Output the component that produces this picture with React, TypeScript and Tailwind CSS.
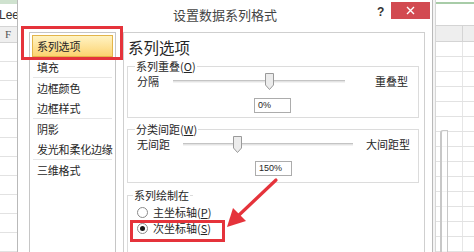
import React from "react";

const FONT = '"Noto Sans CJK SC", "Liberation Sans", sans-serif';

const LIST = [
  { label: "系列选项", selected: true, sepAfter: false },
  { label: "填充", sepAfter: true },
  { label: "边框颜色" },
  { label: "边框样式", sepAfter: true },
  { label: "阴影" },
  { label: "发光和柔化边缘", sepAfter: true },
  { label: "三维格式" },
];

export default function App() {
  return (
    <div
      className="relative w-[474px] h-[252px] overflow-hidden bg-white flex text-[#262626]"
      style={{ fontFamily: FONT }}
    >
      <LeftSheet />

      {/* dialog */}
      <div className="w-[416px] h-full shrink-0 bg-white border-l border-r border-[#b9b9b9] flex flex-col">
        {/* title bar */}
        <div className="h-[32px] shrink-0 flex items-start">
          <div className="w-[55px]" />
          <div className="flex-1 text-center text-[13px] leading-[32px] text-[#444] -mt-[1px]">设置数据系列格式</div>
          <div className="w-[55px] flex items-start">
            <span className="mt-[5px] w-[7px] text-[12px] font-bold leading-[14px] text-[#333]" style={{ fontFamily: '"Liberation Sans", sans-serif' }}>?</span>
            <div className="ml-[7px] mt-[2px] w-[39px] h-[17px] bg-[#d24a51] flex items-center justify-center">
              <svg width="9" height="9" viewBox="0 0 9 9">
                <path d="M1 1 L8 8 M8 1 L1 8" stroke="white" strokeWidth="1.4" />
              </svg>
            </div>
          </div>
        </div>

        {/* body */}
        <div className="flex-1 flex pl-[11px] pr-[7px]">
          {/* category list */}
          <div className="w-[87px] h-[240px] shrink-0 border border-[#c6c6c6] bg-white pt-[2px] px-[2px] text-[11px] tracking-[-0.2px]">
            {LIST.map((it) => (
              <div key={it.label}>
                <div
                  className={
                    it.selected
                      ? "h-[22px] flex items-center pl-[4px] whitespace-nowrap border border-[#e3b54a] bg-gradient-to-b from-[#fff3c2] to-[#fcd36f]"
                      : "h-[20px] flex items-center pl-[5px] whitespace-nowrap"
                  }
                >
                  {it.label}
                </div>
                {it.sepAfter && <div className="h-px mx-[1px] bg-[#e6e6e6]" />}
              </div>
            ))}
          </div>

          {/* option pane */}
          <div className="ml-[7px] flex-1 h-[240px] border border-[#cfcfcf] bg-white pl-[3px] pr-[5px] text-[11px]">
            <div className="text-[15.5px] leading-[20px] pl-[1px] pt-[4px]">系列选项</div>

            {/* group: overlap */}
            <Group label={<>系列重叠(<u>O</u>)</>} className="mt-[9px] h-[52px]">
              <SliderRow left="分隔" right="重叠型" leftW={36} trackW={172} thumb={92} rightPr={10} />
              <Field value="0%" ml={126} />
            </Group>

            {/* group: gap width */}
            <Group label={<>分类间距(<u>W</u>)</>} className="mt-[11px] h-[54px]">
              <SliderRow left="无间距" right="大间距型" leftW={46} trackW={170} thumb={50} rightPr={8} />
              <Field value="150%" ml={127} />
            </Group>

            {/* group: plot on */}
            <div className="relative mt-[12px] w-[66px] h-[60px] border-l border-t border-[#dcdcdc]">
              <span className="absolute -top-[9px] left-[5px] bg-white px-[1px] leading-[16px] whitespace-nowrap">系列绘制在</span>
              <div className="pt-[8px] pl-[9px] w-max whitespace-nowrap">
                <Radio label={<>主坐标轴(<u>P</u>)</>} />
                <Radio label={<>次坐标轴(<u>S</u>)</>} checked />
              </div>
            </div>
          </div>
        </div>
      </div>

      <RightSheet />

      {/* annotations */}
      <div className="absolute left-[21px] top-[26px] w-[102px] h-[34px] border-[3px] border-[#e5333b]" />
      <div className="absolute left-[130px] top-[220px] w-[95px] h-[22px] border-[3px] border-[#e5333b]" />
      <svg className="absolute left-0 top-0" width="474" height="252">
        <line x1="276" y1="180" x2="238" y2="216" stroke="#e5333b" strokeWidth="3.2" strokeLinecap="round" />
        <polygon points="227,227 233,208 246,221" fill="#e5333b" />
      </svg>
    </div>
  );
}

function Group({ label, className, children }: { label: React.ReactNode; className: string; children: React.ReactNode }) {
  return (
    <div className={`relative border border-[#dcdcdc] ${className}`}>
      <span className="absolute -top-[9px] left-[7px] bg-white px-[1px] leading-[16px] whitespace-nowrap">{label}</span>
      {children}
    </div>
  );
}

function SliderRow({
  left, right, leftW, trackW, thumb, rightPr,
}: { left: string; right: string; leftW: number; trackW: number; thumb: number; rightPr: number }) {
  return (
    <div className="mt-[6px] h-[17px] flex items-center pl-[9px]" style={{ paddingRight: rightPr }}>
      <span style={{ width: leftW }} className="shrink-0">{left}</span>
      <div className="relative h-[3px] border-t border-b border-t-[#c4c4c4] border-b-[#f2f2f2] bg-[#e3e3e3]" style={{ width: trackW }}>
        <svg className="absolute -top-[8px]" style={{ left: thumb }} width="9" height="17" viewBox="0 0 9 17">
          <path d="M0.5 0.5 H8.5 V12 L4.5 16.5 L0.5 12 Z" fill="#ececec" stroke="#9a9a9a" />
        </svg>
      </div>
      <span className="ml-auto">{right}</span>
    </div>
  );
}

function Field({ value, ml }: { value: string; ml: number }) {
  return (
    <div
      className="mt-[8px] w-[37px] h-[15px] border border-[#acacac] bg-white text-[9px] leading-[13px] pl-[3px]"
      style={{ marginLeft: ml, fontFamily: '"Liberation Sans", sans-serif' }}
    >
      {value}
    </div>
  );
}

function Radio({ label, checked }: { label: React.ReactNode; checked?: boolean }) {
  return (
    <div className="h-[16px] flex items-center">
      <span className="shrink-0 w-[11px] h-[11px] rounded-full border border-[#8a8a8a] bg-white flex items-center justify-center">
        {checked && <span className="w-[5px] h-[5px] rounded-full bg-[#1a1a1a]" />}
      </span>
      <span className="ml-[5px]">{label}</span>
    </div>
  );
}

function LeftSheet() {
  return (
    <div className="w-[17px] h-full shrink-0 flex flex-col overflow-hidden">
      <div className="h-[4px] bg-[#cfe2cf]" />
      <div className="h-[22px] text-[12px] leading-[22px] whitespace-nowrap text-[#333] -ml-[1px]" style={{ fontFamily: '"Liberation Sans", sans-serif' }}>Lee</div>
      <div className="h-[17px] bg-[#efefef] border-t border-b border-[#d4d4d4] text-[11px] leading-[15px] pl-[5px] text-[#555]" style={{ fontFamily: '"Liberation Serif", serif' }}>F</div>
      {Array.from({ length: 11 }).map((_, i) => (
        <div key={i} className="h-[19px] shrink-0 border-b border-[#e2e2e2]" />
      ))}
    </div>
  );
}

function RightSheet() {
  return (
    <div className="relative flex-1 h-full flex">
      <div className="w-[3px] h-full bg-[#f4f4f4] border-r border-[#d6d6d6]" />
      <div className="flex-1 flex flex-col">
        <div className="h-[4px] border-b-2 border-[#a8cca8]" />
        <div className="h-[22px] bg-white" />
        <div className="h-[17px] bg-[#eeeeee] border-t border-b border-[#d4d4d4] flex">
          <div className="w-[27px] border-r border-[#d4d4d4]" />
        </div>
        {Array.from({ length: 14 }).map((_, i) => (
          <div key={i} className="h-[15px] shrink-0 border-b border-[#e2e2e2] flex">
            <div className="w-[27px] border-r border-[#e6e6e6]" />
          </div>
        ))}
      </div>
      {/* chart object edge */}
      <div className="absolute left-[7px] top-[130px] w-[8px] h-[130px] border-l-2 border-r border-t border-[#c8c8c8] rounded-tl-[3px] bg-white/60" />
    </div>
  );
}
